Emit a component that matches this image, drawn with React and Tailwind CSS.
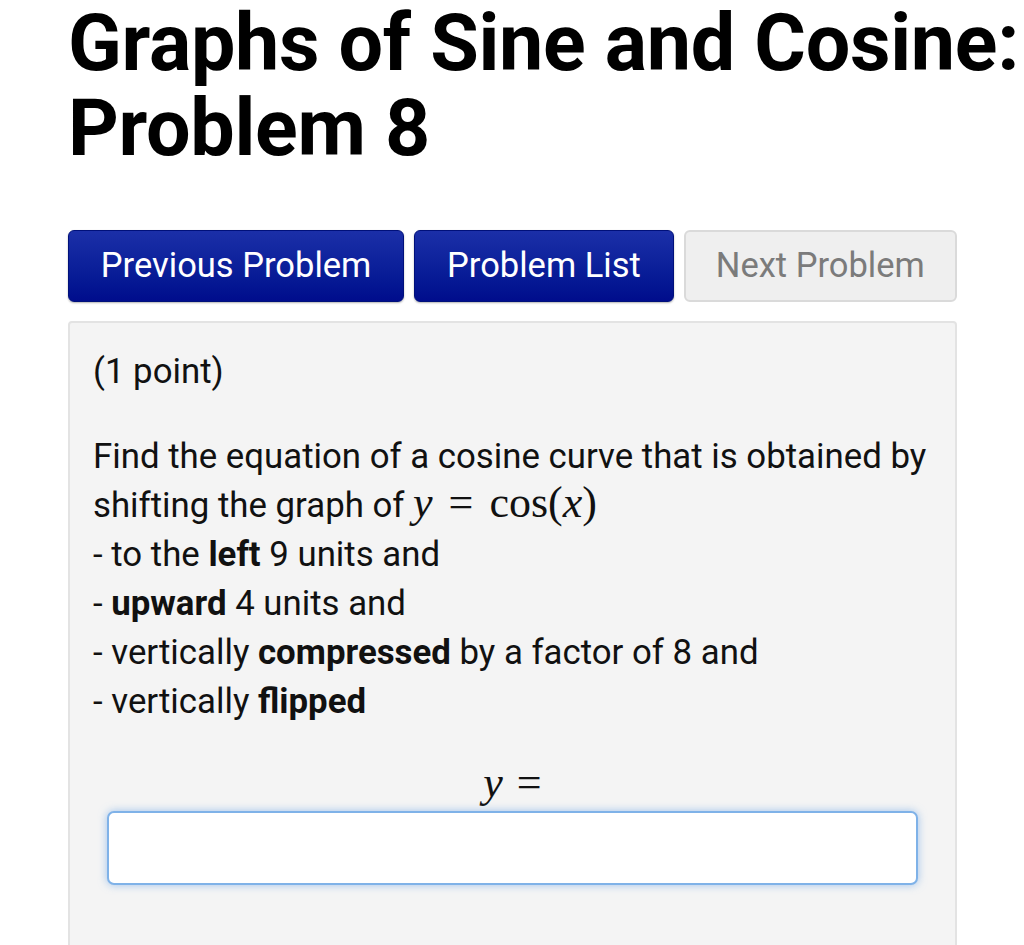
const Math = ({ children }) => (
  <span className="font-['Liberation_Serif','DejaVu_Serif',serif] text-[44px] leading-none">{children}</span>
);

const App = () => {
  return (
    <div className="min-h-[945px] bg-white pl-[68px] pr-[67px] font-['Roboto','Liberation_Sans',sans-serif] text-[#111]">
      <h1 className="whitespace-nowrap pt-[1px] text-[79px] font-bold leading-[85px] tracking-[-0.3px] text-black">
        Graphs of Sine and Cosine:
        <br />
        Problem 8
      </h1>

      {/* nav buttons */}
      <div className="mt-[59px] flex gap-[10px]">
        <button className="h-[72px] w-[337px] rounded-[6px] border border-[#00107a] bg-gradient-to-b from-[#1b2fa8] to-[#000c8c] text-[34.5px] text-white shadow-[0_1px_2px_rgba(0,0,0,0.3)]">
          Previous Problem
        </button>
        <button className="h-[72px] w-[260px] rounded-[6px] border border-[#00107a] bg-gradient-to-b from-[#1b2fa8] to-[#000c8c] text-[34.5px] text-white shadow-[0_1px_2px_rgba(0,0,0,0.3)]">
          Problem List
        </button>
        <button className="h-[72px] w-[274px] rounded-[6px] border-2 border-[#dadada] bg-[#efefef] text-[34.5px] text-[#7b7b7b]">
          Next Problem
        </button>
      </div>

      {/* problem body */}
      <div className="mt-[19px] min-h-[640px] rounded-[4px] border-2 border-[#e3e3e3] bg-[#f4f4f4] px-[23px] pt-[24px] text-[34.8px] leading-[49px]">
        <p>(1 point)</p>
        <p className="mt-[36px]">
          Find the equation of a cosine curve that is obtained by shifting the graph of{" "}
          <Math>
            <i>y</i>
            <span className="mx-[16px]">=</span>cos(<i>x</i>)
          </Math>
        </p>
        <p>
          - to the <b>left</b> 9 units and
        </p>
        <p>
          - <b>upward</b> 4 units and
        </p>
        <p>
          - vertically <b>compressed</b> by a factor of 8 and
        </p>
        <p>
          - vertically <b>flipped</b>
        </p>

        <div className="mt-[35px] text-center leading-[49px]">
          <Math>
            <i>y</i>
            <span className="ml-[14px]">=</span>
          </Math>
        </div>
        <div className="mx-[14px] mt-[1px]">
          <input
            type="text"
            className="h-[74px] w-full rounded-[7px] border-2 border-[#7fb2e8] bg-white shadow-[0_0_8px_rgba(100,160,230,0.6)] outline-none"
          />
        </div>
      </div>
    </div>
  );
};

export default App;
